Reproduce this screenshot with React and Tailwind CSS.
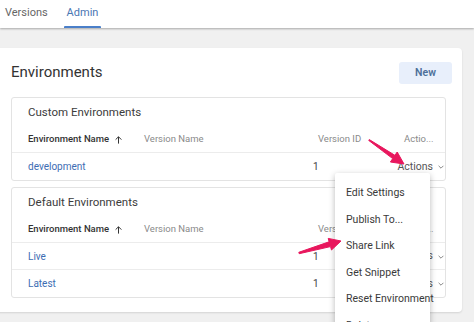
import React from "react";

const Chevron = () => (
  <svg width="8" height="8" viewBox="0 0 10 10" className="ml-[4px] mt-[1px]">
    <path d="M2 3.5 L5 6.5 L8 3.5" fill="none" stroke="#777" strokeWidth="1.1" />
  </svg>
);

const UpArrow = () => (
  <svg width="9" height="10" viewBox="0 0 10 10" className="ml-[5px]">
    <path d="M5 9 V1.5 M1.8 4.6 L5 1.4 L8.2 4.6" fill="none" stroke="#333" strokeWidth="1.1" />
  </svg>
);

const EnvTable = ({ title, rows, headerAction }) => (
  <div className="bg-white border border-[#e3e3e3] rounded-[3px]">
    <div className="h-[29px] pl-[16px] flex items-center text-[11.5px] text-[#3c3c3c]">
      {title}
    </div>
    <div className="h-[26px] pl-[16px] flex items-center text-[9.5px] border-b border-[#ececec]">
      <div className="w-[116px] flex items-center font-medium text-[#333]">
        Environment Name
        <UpArrow />
      </div>
      <div className="w-[174px] text-[#8a8a8a]">Version Name</div>
      <div className="w-[86px] text-[#8a8a8a]">Version ID</div>
      <div className="text-[#8a8a8a]">{headerAction}</div>
    </div>
    {rows.map((r, i) => (
      <div
        key={r}
        className={`h-[27px] pl-[16px] flex items-center text-[10px] ${
          i < rows.length - 1 ? "border-b border-[#ececec]" : ""
        }`}
      >
        <div className="w-[290px] text-[#3d6db3]">{r}</div>
        <div className="w-[86px] text-[#444]">1</div>
        <div className="flex items-center text-[#555] text-[10.5px]">
          Actions
          <Chevron />
        </div>
      </div>
    ))}
  </div>
);

export default function App() {
  const menu = [
    "Edit Settings",
    "Publish To...",
    "Share Link",
    "Get Snippet",
    "Reset Environment",
    "Delete",
  ];
  return (
    <div
      className="relative w-[474px] h-[322px] overflow-hidden bg-[#f0f0f0]"
      style={{ fontFamily: "Roboto, 'Liberation Sans', sans-serif" }}
    >
      <div className="h-[28px] bg-white shadow-[0_1px_2px_rgba(0,0,0,0.3)] flex items-start relative z-10">
        <div className="ml-[5px] w-[43px] pt-[5px] text-[11px] text-[#666]">Versions</div>
        <div className="ml-[16px] w-[37px] h-[28px] flex flex-col items-center justify-between">
          <div className="pt-[5px] text-[11px] text-[#4a76b3]">Admin</div>
          <div className="w-full h-[2px] bg-[#4a7fc9] rounded-t-[1px]" />
        </div>
      </div>

      <div className="mt-[20px] ml-[-4px] w-[466px] h-[264px] bg-white rounded-[4px] shadow-[0_1px_2px_rgba(0,0,0,0.12)] pl-[15px] pr-[16px]">
        <div className="flex items-center justify-between h-[49px]">
          <div className="text-[15px] text-[#333]">Environments</div>
          <div className="mr-[-6px] w-[53px] h-[22px] rounded-[3px] bg-[#e8effb] flex items-center justify-center text-[10.5px] font-semibold text-[#4d6f99]">
            New
          </div>
        </div>
        <div className="flex flex-col gap-[6px]">
          <EnvTable
            title="Custom Environments"
            rows={["development"]}
            headerAction="Actio..."
          />
          <EnvTable
            title="Default Environments"
            rows={["Live", "Latest"]}
            headerAction="Actio..."
          />
        </div>
      </div>

      <div className="absolute left-[335px] top-[173px] w-[95px] h-[160px] bg-white shadow-[0_2px_6px_rgba(0,0,0,0.28)] rounded-[2px] pt-[7px] z-20">
        {menu.map((m) => (
          <div key={m} className="h-[26.5px] pl-[11px] flex items-center text-[10.5px] text-[#3a3a3a] whitespace-nowrap">
            {m}
          </div>
        ))}
      </div>

      <svg className="absolute left-0 top-0 z-30" width="474" height="322" viewBox="0 0 474 322">
        <polygon
          points="368.7,140.4 392.7,158.6 390.4,162 404,164 397.2,152 394.9,155.3 369.3,139.6"
          fill="#e8175d"
          stroke="#e8175d"
          strokeWidth="1"
          strokeLinejoin="round"
        />
        <polygon
          points="299.2,253.7 330.5,246.6 331.5,250 341,241 328.2,238.4 329.1,241.8 298.8,252.3"
          fill="#e8175d"
          stroke="#e8175d"
          strokeWidth="1"
          strokeLinejoin="round"
        />
      </svg>
    </div>
  );
}
